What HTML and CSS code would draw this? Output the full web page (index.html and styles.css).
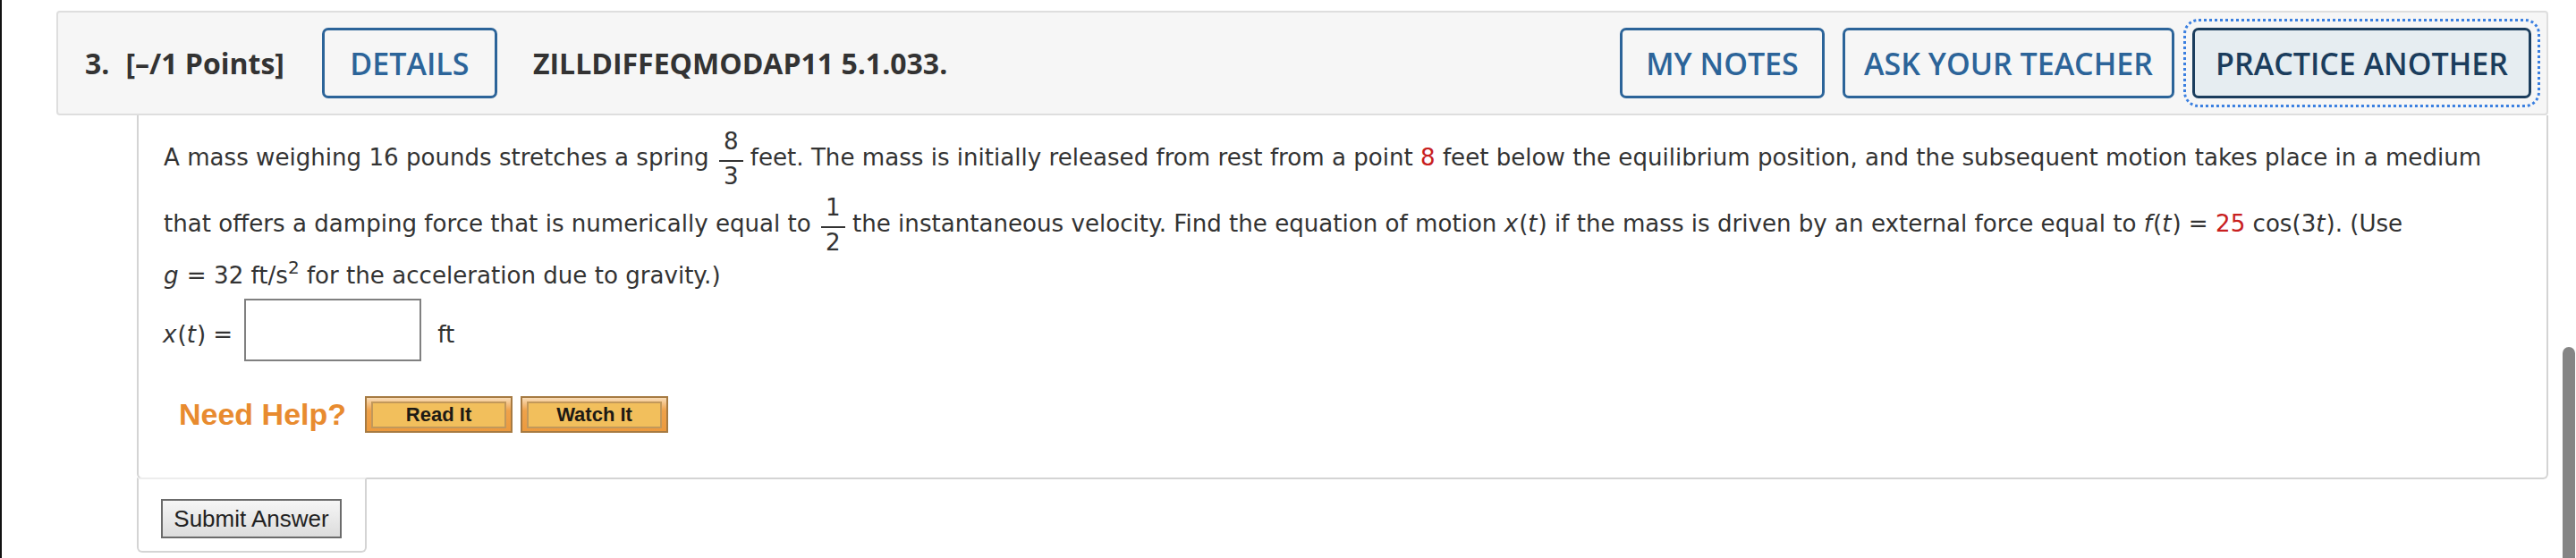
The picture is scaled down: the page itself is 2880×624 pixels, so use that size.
FILE: index.html
```html
<!DOCTYPE html>
<html lang="en">
<head>
<meta charset="utf-8">
<title>Question 3</title>
<link rel="stylesheet" href="styles.css">
</head>
<body>
<div class="page">
  <div class="qhead">
    <span class="qnum">3.</span>
    <span class="qpts">[–/1 Points]</span>
    <button class="hbtn w-details">DETAILS</button>
    <span class="qid">ZILLDIFFEQMODAP11 5.1.033.</span>
    <div class="hright">
      <button class="hbtn w-notes">MY NOTES</button>
      <button class="hbtn w-ask">ASK YOUR TEACHER</button>
      <button class="hbtn w-practice primary">PRACTICE ANOTHER</button>
    </div>
  </div>
  <div class="qbody">
    <p class="prompt">A mass weighing 16 pounds stretches a spring <span class="frac"><span class="num">8</span><span class="den">3</span></span> feet. The mass is initially released from rest from a point <span class="red">8</span> feet below the equilibrium position, and the subsequent motion takes place in a medium<br>that offers a damping force that is numerically equal to <span class="frac"><span class="num">1</span><span class="den">2</span></span> the instantaneous velocity. Find the equation of motion <i>x</i>(<i>t</i>) if the mass is driven by an external force equal to <i>f</i>(<i>t</i>) = <span class="red">25</span> cos(3<i>t</i>). (Use<br><i>g</i> = 32 ft/s<sup>2</sup> for the acceleration due to gravity.)</p>
    <div class="answer-row">
      <span class="lbl"><i>x</i>(<i>t</i>) =</span>
      <input class="ans" type="text" aria-label="x(t)">
      <span class="lbl unit">ft</span>
    </div>
    <div class="help-row">
      <span class="need">Need Help?</span>
      <button class="helpbtn"><span class="inner">Read It</span></button>
      <button class="helpbtn"><span class="inner">Watch It</span></button>
    </div>
  </div>
  <div class="submit-tab"><button class="submit">Submit Answer</button></div>
</div>
<div class="scrollthumb"></div>
</body>
</html>
```

FILE: styles.css
```css
html, body {
  margin: 0;
  padding: 0;
  background: #fff;
}
body {
  border-left: 2px solid #111;
  min-height: 624px;
  box-sizing: border-box;
  overflow: hidden;
}
.page {
  padding: 12px 31px 0 61px;
}
.qhead {
  display: flex;
  align-items: center;
  height: 117px;
  box-sizing: border-box;
  border: 2px solid #dedede;
  border-radius: 4px;
  background: #f6f6f6;
  padding: 0 17px 0 30px;
  font-family: "Open Sans", "Liberation Sans", sans-serif;
  font-size: 32px;
  color: #333;
}
.qnum, .qpts, .qid {
  font-weight: 700;
}
.qnum { margin-right: 18px; }
.qpts { margin-right: 42px; }
.qid { margin-left: 40px; }
.hbtn {
  height: 79px;
  box-sizing: border-box;
  border: 3px solid #2c6499;
  border-radius: 7px;
  background: transparent;
  padding: 0;
  font-family: "Open Sans", "Liberation Sans", sans-serif;
  font-size: 34px;
  font-weight: 600;
  color: #2c6499;
  text-align: center;
  white-space: nowrap;
  cursor: pointer;
}
.w-details { width: 196px; }
.w-notes { width: 229px; }
.w-ask { width: 371px; }
.w-practice { width: 379px; }
.hright {
  margin-left: auto;
  display: flex;
  align-items: center;
  gap: 20px;
}
.hbtn.primary {
  background: #e6edf1;
  border-color: #1b3d5d;
  color: #1b3d5d;
  outline: 3px dotted #3a7fe0;
  outline-offset: 7px;
}
.qbody {
  margin-left: 90px;
  border: 2px solid #d4d4d4;
  border-top: none;
  border-radius: 0 0 6px 6px;
  padding: 12px 28px 50px 28px;
  font-family: "DejaVu Sans", Verdana, sans-serif;
  font-size: 26.1px;
  color: #333;
}
.prompt {
  margin: 0;
  line-height: 39px;
  white-space: nowrap;
}
.prompt i, .lbl i {
  font-style: italic;
  padding-right: 1px;
}
.red { color: #c8201e; }
.frac {
  display: inline-flex;
  flex-direction: column;
  vertical-align: 17.5px;
  margin-left: 3px;
  text-align: center;
  line-height: 26px;
}
.frac .num {
  padding: 4px 5px 8px;
  border-bottom: 2px solid #333;
}
.frac .den {
  padding: 3px 5px 5px;
}
sup {
  font-size: 20px;
  line-height: 0;
  vertical-align: 11px;
}
.answer-row {
  display: flex;
  align-items: center;
  margin-top: 6px;
  margin-left: -1px;
}
.lbl {
  padding-top: 10px;
}
.ans {
  width: 198px;
  height: 70px;
  box-sizing: border-box;
  border: 2px solid #808080;
  margin: 0 18px 0 13px;
  padding: 0 6px;
  font-size: 26px;
  background: #fff;
}
.help-row {
  display: flex;
  align-items: center;
  margin-top: 39px;
  margin-left: 17px;
}
.need {
  font-family: "Liberation Sans", Arial, sans-serif;
  font-weight: 700;
  font-size: 34px;
  color: #e88b2f;
  margin-right: 21px;
}
.helpbtn {
  width: 165px;
  height: 41px;
  box-sizing: border-box;
  border: 2px solid #a67a42;
  background: linear-gradient(#f9dcb6 0%, #efa24a 38%, #ec9a3e 100%);
  padding: 4px 5px 3px;
  margin-right: 9px;
  display: flex;
  cursor: pointer;
}
.helpbtn .inner {
  flex: 1;
  display: flex;
  align-items: center;
  justify-content: center;
  border: 2px solid #c2985a;
  background: #f2bf5c;
  font-family: "Liberation Sans", Arial, sans-serif;
  font-weight: 700;
  font-size: 22px;
  color: #1d1a14;
}
.submit-tab {
  display: inline-block;
  margin-left: 90px;
  margin-top: -2px;
  border: 2px solid #d4d4d4;
  border-top-color: #ededed;
  border-radius: 0 0 6px 6px;
  padding: 22px 26px 14px 25px;
  background: #fff;
  position: relative;
}
.submit {
  width: 202px;
  height: 44px;
  box-sizing: border-box;
  border: 2px solid #6b6b6b;
  background: linear-gradient(#f6f6f6, #dcdcdc);
  font-family: "Liberation Sans", Arial, sans-serif;
  font-size: 26px;
  color: #222;
  padding: 0;
  display: block;
}
.scrollthumb {
  position: fixed;
  right: 1px;
  top: 388px;
  bottom: 0;
  width: 14px;
  background: #858585;
  border-radius: 7px 7px 0 0;
}
```
